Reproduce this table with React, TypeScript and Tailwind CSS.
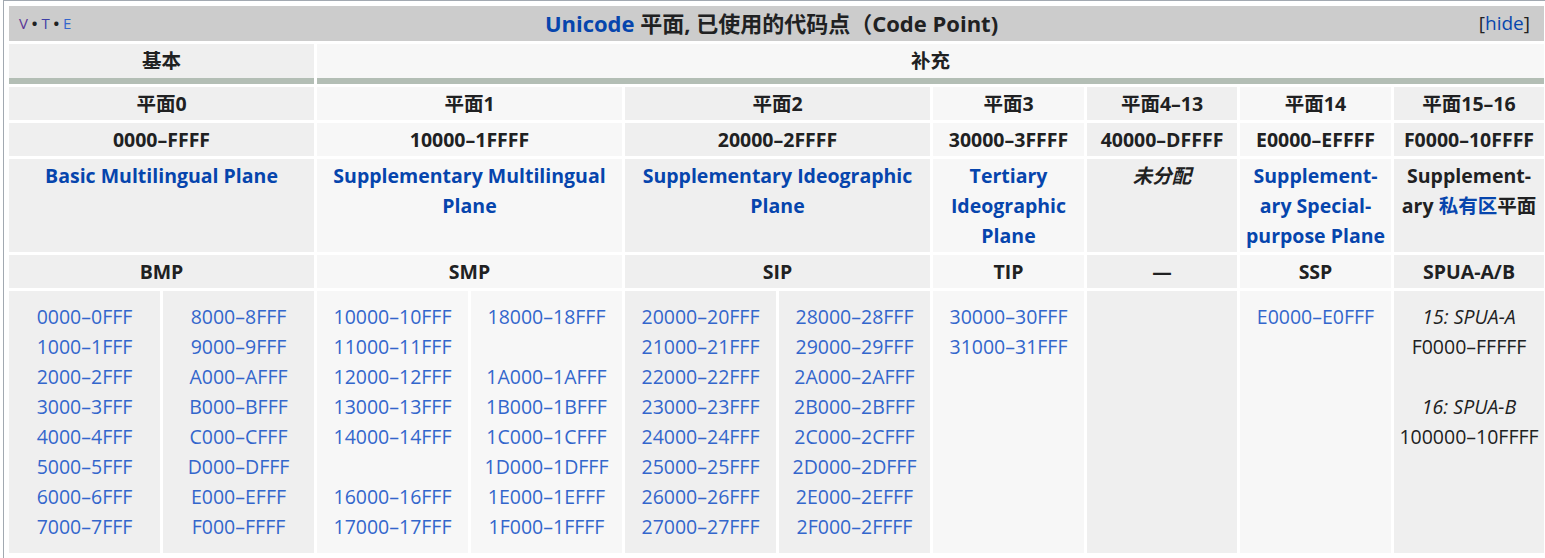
import React from "react";

const ODD = "bg-[#efefef]";
const EVEN = "bg-[#f7f7f7]";
const LINK = "text-[#0645ad]";
const RANGE = "text-[#3366cc]";

const spanClass: Record<number, string> = {
  1: "col-span-1",
  2: "col-span-2",
  8: "col-span-8",
  10: "col-span-10",
};

const Cell = ({
  span = 1,
  bg,
  className = "",
  children,
}: {
  span?: number;
  bg: string;
  className?: string;
  children?: React.ReactNode;
}) => (
  <div className={`${spanClass[span]} ${bg} ${className}`}>{children}</div>
);

const planes = [
  { name: "平面0", range: "0000–FFFF", abbr: "BMP", span: 2, bg: ODD },
  { name: "平面1", range: "10000–1FFFF", abbr: "SMP", span: 2, bg: EVEN },
  { name: "平面2", range: "20000–2FFFF", abbr: "SIP", span: 2, bg: ODD },
  { name: "平面3", range: "30000–3FFFF", abbr: "TIP", span: 1, bg: EVEN },
  { name: "平面4–13", range: "40000–DFFFF", abbr: "—", span: 1, bg: ODD },
  { name: "平面14", range: "E0000–EFFFF", abbr: "SSP", span: 1, bg: EVEN },
  { name: "平面15–16", range: "F0000–10FFFF", abbr: "SPUA-A/B", span: 1, bg: ODD },
];

const names: React.ReactNode[] = [
  <span className={LINK}>Basic Multilingual Plane</span>,
  <span className={LINK}>Supplementary Multilingual Plane</span>,
  <span className={LINK}>Supplementary Ideographic Plane</span>,
  <span className={LINK}>
    Tertiary
    <br />
    Ideographic
    <br />
    Plane
  </span>,
  <span className="italic">未分配</span>,
  <span className={LINK}>
    Supplement-
    <br />
    ary Special-
    <br />
    purpose Plane
  </span>,
  <span>
    Supplement-
    <br />
    ary <span className={LINK}>私有区</span>平面
  </span>,
];

const hexCols = (prefix: string, digits: string[]) =>
  digits.map((d) => (d ? `${prefix}${d}000–${prefix}${d}FFF` : ""));

const dataCols: { items: string[]; bg: string }[] = [
  { items: hexCols("", ["0", "1", "2", "3", "4", "5", "6", "7"]), bg: ODD },
  { items: hexCols("", ["8", "9", "A", "B", "C", "D", "E", "F"]), bg: ODD },
  { items: hexCols("1", ["0", "1", "2", "3", "4", "", "6", "7"]), bg: EVEN },
  { items: hexCols("1", ["8", "", "A", "B", "C", "D", "E", "F"]), bg: EVEN },
  { items: hexCols("2", ["0", "1", "2", "3", "4", "5", "6", "7"]), bg: ODD },
  { items: hexCols("2", ["8", "9", "A", "B", "C", "D", "E", "F"]), bg: ODD },
  { items: hexCols("3", ["0", "1"]), bg: EVEN },
  { items: [], bg: ODD },
  { items: ["E0000–E0FFF"], bg: EVEN },
];

export default function App() {
  return (
    <div className="w-[1545px] h-[558px] overflow-hidden bg-white pl-[3px] font-['Open_Sans','Noto_Sans_CJK_SC',sans-serif] text-[#202122]">
      <div className="w-[1547px] border border-[#a2a9b1] p-[5px]">
        <div className="grid grid-cols-[151px_151px_151px_151px_151px_151px_151px_150px_151px_150px] grid-rows-[35px_40px_33px_33px_93px_33px_262px] gap-[3px] text-[19.5px]">
          {/* Title */}
          <Cell span={10} bg="bg-[#cccccc]" className="grid grid-cols-[1fr_auto_1fr] items-center">
            <div className="pl-[10px] text-[15px] leading-none">
              <span className="text-[#5a3696]">V</span>
              <span className="font-bold text-[#202122]"> • </span>
              <span className="text-[#3f3fa6]">T</span>
              <span className="font-bold text-[#202122]"> • </span>
              <span className="text-[#3366cc]">E</span>
            </div>
            <div className="pr-[10px] text-[22px] font-bold leading-[35px]">
              <span className={LINK}>Unicode</span> 平面, 已使用的代码点（Code Point)
            </div>
            <div className="pr-[14px] text-right text-[19px] leading-none">
              [<span className={LINK}>hide</span>]
            </div>
          </Cell>

          {/* Basic / Supplementary */}
          <Cell span={2} bg={ODD} className="flex items-center justify-center border-b-[6px] border-[#b3beb5] font-bold">
            基本
          </Cell>
          <Cell span={8} bg={EVEN} className="flex items-center justify-center border-b-[6px] border-[#b3beb5] font-bold">
            补充
          </Cell>

          {/* Plane numbers */}
          {planes.map((p) => (
            <Cell key={p.name} span={p.span} bg={p.bg} className="flex items-center justify-center font-bold">
              {p.name}
            </Cell>
          ))}

          {/* Ranges */}
          {planes.map((p) => (
            <Cell key={p.range} span={p.span} bg={p.bg} className="flex items-center justify-center font-bold">
              {p.range}
            </Cell>
          ))}

          {/* Names */}
          {planes.map((p, i) => (
            <Cell key={p.abbr} span={p.span} bg={p.bg} className="pt-[2px] px-[4px] text-center font-bold leading-[30px]">
              {names[i]}
            </Cell>
          ))}

          {/* Abbreviations */}
          {planes.map((p) => (
            <Cell key={p.abbr + "-abbr"} span={p.span} bg={p.bg} className="flex items-center justify-center font-bold">
              {p.abbr}
            </Cell>
          ))}

          {/* Blocks */}
          {dataCols.map((col, i) => (
            <Cell key={i} bg={col.bg} className="flex flex-col items-center pt-[11px] leading-[30px]">
              {col.items.map((item, j) => (
                <div key={j} className={`h-[30px] whitespace-nowrap ${RANGE}`}>
                  {item}
                </div>
              ))}
            </Cell>
          ))}
          <Cell bg={ODD} className="flex flex-col items-center pt-[11px] leading-[30px] whitespace-nowrap">
            <div className="italic">15: SPUA-A</div>
            <div>F0000–FFFFF</div>
            <div className="h-[30px]" />
            <div className="italic">16: SPUA-B</div>
            <div>100000–10FFFF</div>
          </Cell>
        </div>
      </div>
    </div>
  );
}
